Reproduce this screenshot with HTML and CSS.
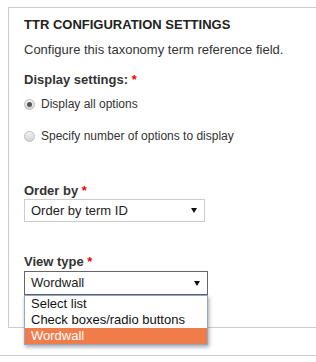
FILE: index.html
```html
<!DOCTYPE html>
<html>
<head>
<meta charset="utf-8" />
<title>TTR configuration</title>
<link rel="stylesheet" href="styles.css">
</head>
<body>
	<div id="wrap">
		<div class="fieldset">
			<h2 class="legend">TTR CONFIGURATION SETTINGS</h2>
			<p class="desc">Configure this taxonomy term reference field.</p>

			<div class="item display">
				<label class="lbl">Display settings: <span class="req">*</span></label>
				<div class="radio first"><span class="dot on"></span>Display all options</div>
				<div class="radio"><span class="dot"></span>Specify number of options to display</div>
			</div>

			<div class="item order">
				<label class="lbl">Order by <span class="req">*</span></label>
				<div class="sel">Order by term ID<span class="arrow"></span></div>
			</div>

			<div class="item view">
				<label class="lbl">View type <span class="req">*</span></label>
				<div class="selWrap">
					<div class="sel open">Wordwall<span class="arrow"></span></div>
					<ul class="opts">
						<li>Select list</li>
						<li>Check boxes/radio buttons</li>
						<li class="act">Wordwall</li>
					</ul>
				</div>
			</div>
		</div>
		<div class="rule"></div>
	</div>
</body>
</html>
```

FILE: styles.css
```css
body, div, p, ul, li, h2, label{margin:0; padding:0;}
li{list-style:none;}
body{font-family:"Liberation Sans", Arial, sans-serif; font-size:13px; color:#333; background:#fff; overflow:hidden;}

#wrap {padding:7px 0 0 8px;}
.fieldset {border:1px solid #ccc; border-right:0; padding:9px 15px 0 15px; height:310px;}
.legend {font-size:13px; line-height:16px; font-weight:bold; color:#222;}
.desc {font-size:13px; line-height:16px; margin-top:9px;}

.lbl {display:block; font-size:13px; font-weight:bold; line-height:16px; color:#333;}
.req {color:#e00;}
.display {margin-top:14px;}

.radio {font-size:12px; line-height:16px; display:flex; align-items:center;}
.radio.first {margin-top:8px;}
.radio + .radio {margin-top:16px;}
.dot {width:9px; height:9px; border:1px solid #bbb; border-radius:50%; margin:1px 6px 0 0; background:linear-gradient(#f2f2f2, #d4d4d4); position:relative;}
.dot.on:after {content:""; position:absolute; left:2px; top:2px; width:5px; height:5px; border-radius:50%; background:#555;}

.order {margin-top:39px;}
.view {margin-top:32px;}
.view .lbl {margin-bottom:1px;}

.sel {width:173px; height:21px; line-height:21px; border:1px solid #ccc; padding-left:6px; font-size:13px; color:#222; position:relative; background:#fff;}
.sel.open {width:176px; height:22px; line-height:22px; border-color:#666;}
.arrow {position:absolute; right:7px; top:8px; width:0; height:0; border-left:3px solid transparent; border-right:3px solid transparent; border-top:5px solid #111;}
.open .arrow {top:9px;}

.selWrap {position:relative;}
.opts {position:absolute; left:0; top:24px; width:182px; border:1px solid #8fa8c8; background:#fff; box-shadow:1px 2px 4px rgba(0,0,0,0.35); font-size:13px; color:#111;}
.opts li {height:16px; line-height:16px; padding-left:6px;}
.opts li.act {background:#f07c4a; color:#fff;}

.rule {border-top:1px solid #ccc; margin:27px 0 0 -8px;}
```
